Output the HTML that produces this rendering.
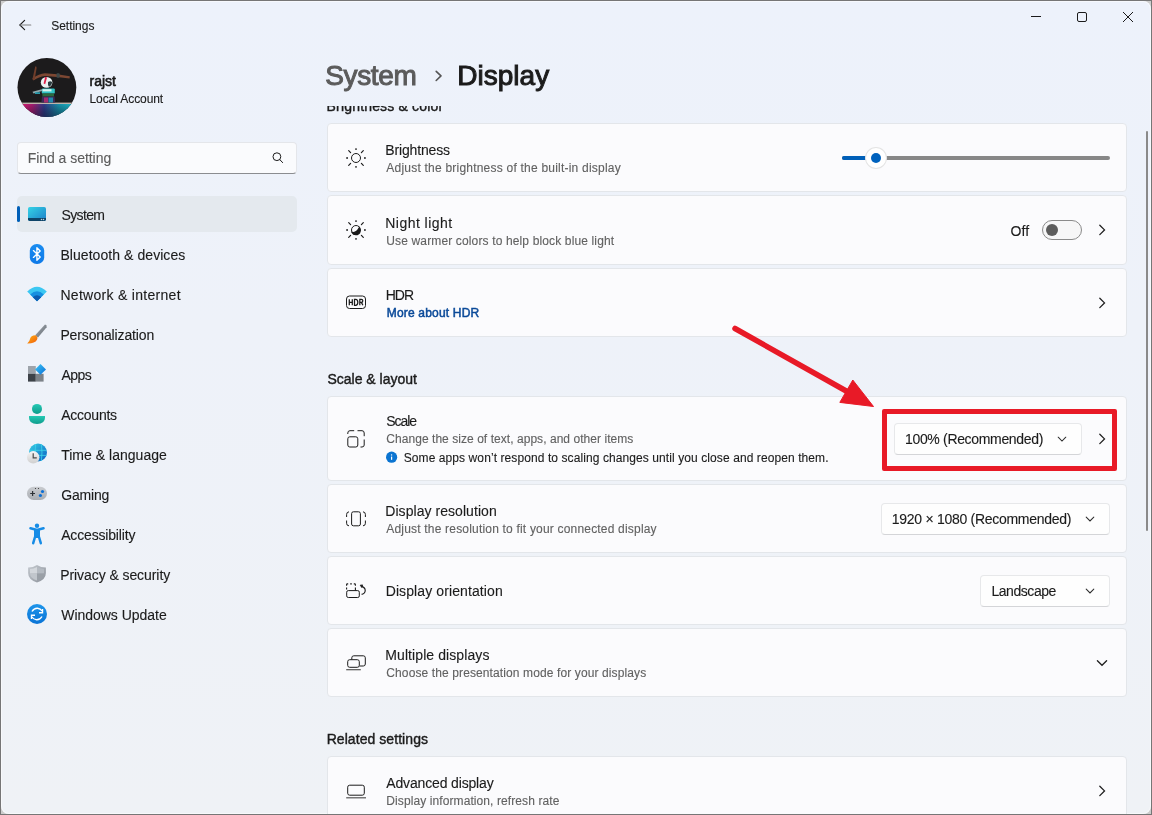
<!DOCTYPE html>
<html><head><meta charset="utf-8">
<style>
html,body{margin:0;padding:0;width:1152px;height:815px;overflow:hidden;background:#767676;}
*{box-sizing:border-box;}
#outer{position:absolute;left:1px;top:1px;width:1150px;height:813px;background:#cdcdcd;overflow:hidden;}
#win{position:absolute;left:0;top:0;width:1150px;height:813px;border-radius:8px;overflow:hidden;
 background:linear-gradient(180deg,#edf2fb 0%,#eef2f9 40%,#eff2f6 100%);
 box-shadow:inset 0 0 0 1px rgba(255,255,255,.55);}
.a{position:absolute;}
.t{position:absolute;white-space:nowrap;line-height:1;font-family:"Liberation Sans",sans-serif;-webkit-font-smoothing:antialiased;}
.card{position:absolute;left:327px;width:800px;background:#fbfbfd;border:1px solid #e3e6ea;border-radius:4px;}
.dd{position:absolute;background:#fefefe;border:1px solid #e7e8ea;border-bottom-color:#d4d5d8;border-radius:4px;}
svg{position:absolute;overflow:visible;}
</style></head><body>
<div id="outer"><div id="win">
</div></div>
<div class="a" style="left:0;top:0;width:1152px;height:815px;">

<!-- back arrow -->
<svg style="left:0;top:0" width="1152" height="815" viewBox="0 0 1152 815">
 <g fill="none" stroke="#1b1b1b" stroke-width="1" stroke-linecap="round">
  <path d="M24.6 20.3 L19.8 25 L24.6 29.7" stroke-width="1.15"/>
  <path d="M20.2 25 H30.8" stroke="#808080" stroke-width="1.1"/>
 </g>
 <!-- window controls -->
 <g fill="none" stroke="#1b1b1b" stroke-width="1">
  <path d="M1031 16.5 H1041"/>
  <rect x="1077.5" y="12.5" width="9" height="9" rx="1.5"/>
  <path d="M1123 12 L1133 22 M1133 12 L1123 22"/>
 </g>
 <!-- scrollbar -->
 <rect x="1146" y="131" width="2" height="400" rx="1" fill="#8a8a8a"/>
</svg>

<!-- avatar -->
<svg style="left:17px;top:58px" width="60" height="60" viewBox="0 0 60 60">
 <defs>
  <clipPath id="avc"><circle cx="29.9" cy="29.5" r="29.4"/></clipPath>
  <linearGradient id="avg" x1="0" y1="0" x2="1" y2="0">
   <stop offset="0" stop-color="#ea1870"/><stop offset="0.25" stop-color="#a41c6e"/><stop offset="0.45" stop-color="#2f3a86"/><stop offset="0.7" stop-color="#168fa8"/><stop offset="1" stop-color="#1fc0cc"/>
  </linearGradient>
  <filter id="avb" x="-20%" y="-20%" width="140%" height="140%"><feGaussianBlur stdDeviation="0.45"/></filter>
  <linearGradient id="avd" x1="0" y1="0" x2="0" y2="1">
   <stop offset="0" stop-color="#000" stop-opacity="0"/><stop offset="1" stop-color="#101830" stop-opacity="0.55"/>
  </linearGradient>
 </defs>
 <g clip-path="url(#avc)">
  <rect x="0" y="0" width="60" height="60" fill="#1c1b1c"/>
  <rect x="0" y="44.6" width="60" height="1.4" fill="#bdb3ab"/>
  <rect x="0" y="46" width="60" height="14" fill="url(#avg)"/>
  <rect x="0" y="46" width="60" height="14" fill="url(#avd)"/>
  <g filter="url(#avb)">
  <!-- stick -->
  <path d="M15.5 20.5 Q22 15.5 28 15.2 Q40 15.5 52.8 18.2 L52.6 20.4 Q40 18.6 28 18 Q22 18.5 16.5 22.5 Z" fill="#7b4733"/>
  <path d="M18.2 8.6 Q19.8 8.2 19.6 10 L17.6 22 L15.4 21.6 Z" fill="#6f3d2a"/>
  <rect x="39.5" y="15.2" width="3.2" height="4.6" rx="1" fill="#3f4a4a"/>
  <!-- head -->
  <ellipse cx="29.6" cy="24.4" rx="5.8" ry="5.4" fill="#e9f1f1"/>
  <path d="M31 24 Q33.5 22.5 35.2 24.2 Q34.8 27.8 32 29 Q30.5 27 31 24 Z" fill="#2c3d40"/>
  <path d="M28.2 18.8 L30 19.6 L28.2 26.2 L26.6 25.4 Z" fill="#e0234a"/>
  <!-- body -->
  <rect x="24.8" y="30.4" width="13" height="5.2" rx="1.2" fill="#31c4c6"/>
  <rect x="25.5" y="31.2" width="9" height="2.2" fill="#d8f2ee"/>
  <rect x="25.4" y="35.6" width="11.6" height="3" fill="#2c6a3c"/>
  <path d="M25 38.6 H37.5 L38.2 44.6 H24.4 Z" fill="#3a2a58"/>
  <rect x="27" y="39.5" width="4" height="5" fill="#d02a78" opacity="0.7"/>
  <rect x="31.5" y="39.5" width="4.5" height="5" fill="#1aa0c0" opacity="0.8"/>
  <path d="M15.5 33.8 L24.8 31.2 L25 33 L16.5 35.5 Z" fill="#8fa8ac"/>
  <rect x="18" y="34.3" width="5" height="1.6" fill="#2aa6b8"/>
  </g>
 </g>
</svg>

<!-- search box -->
<div class="a" style="left:17px;top:142px;width:280px;height:32px;background:#fafbfd;border:1px solid #e4e6ea;border-bottom:1px solid #8b8d90;border-radius:4px;"></div>
<svg style="left:0;top:0" width="1" height="1" viewBox="0 0 1 1">
 <g fill="none" stroke="#1b1b1b" stroke-width="1">
  <circle cx="276.9" cy="156.7" r="3.9"/>
  <path d="M279.8 159.6 L282.6 162.6" stroke-linecap="round"/>
 </g>
</svg>

<!-- nav selected -->
<div class="a" style="left:17px;top:196px;width:280px;height:36px;background:#e4e9ee;border-radius:5px;"></div>
<div class="a" style="left:17px;top:206px;width:3px;height:16px;background:#005fb8;border-radius:1.5px;"></div>

<!-- nav icons -->
<svg style="left:0;top:0" width="1" height="1" viewBox="0 0 1 1">
 <defs>
  <linearGradient id="g_sys" x1="0" y1="0" x2="1" y2="1"><stop offset="0" stop-color="#35d3e6"/><stop offset="1" stop-color="#1c7fc8"/></linearGradient>
  <linearGradient id="g_bt" x1="0" y1="0" x2="0" y2="1"><stop offset="0" stop-color="#1a8cf0"/><stop offset="1" stop-color="#0f7ae8"/></linearGradient>
  <linearGradient id="g_brush" x1="0" y1="0" x2="1" y2="1"><stop offset="0" stop-color="#ffb514"/><stop offset="1" stop-color="#f05a0a"/></linearGradient>
  <linearGradient id="g_handle" x1="0" y1="0" x2="1" y2="1"><stop offset="0" stop-color="#a9b0b7"/><stop offset="1" stop-color="#5f666d"/></linearGradient>
  <linearGradient id="g_dia" x1="0" y1="0" x2="1" y2="1"><stop offset="0" stop-color="#3cc6f4"/><stop offset="1" stop-color="#0a6fd8"/></linearGradient>
  <linearGradient id="g_acc" x1="0" y1="0" x2="0" y2="1"><stop offset="0" stop-color="#26c9b4"/><stop offset="1" stop-color="#0e9c8c"/></linearGradient>
  <linearGradient id="g_globe" x1="0" y1="0" x2="1" y2="1"><stop offset="0" stop-color="#36d0e4"/><stop offset="1" stop-color="#0b5fc4"/></linearGradient>
  <linearGradient id="g_clock" x1="0" y1="0" x2="0" y2="1"><stop offset="0" stop-color="#f5f5f5"/><stop offset="1" stop-color="#cfcfcf"/></linearGradient>
  <linearGradient id="g_pad" x1="0" y1="0" x2="0" y2="1"><stop offset="0" stop-color="#c9ccd0"/><stop offset="1" stop-color="#a9adb2"/></linearGradient>
  <linearGradient id="g_shield" x1="0" y1="0" x2="1" y2="1"><stop offset="0" stop-color="#c6cbd1"/><stop offset="1" stop-color="#8b9199"/></linearGradient>
  <linearGradient id="g_upd" x1="0" y1="0" x2="0" y2="1"><stop offset="0" stop-color="#1e95ea"/><stop offset="1" stop-color="#0a74d6"/></linearGradient>
 </defs>
 <!-- System -->
 <rect x="28" y="207" width="18" height="14" rx="1.8" fill="url(#g_sys)"/>
 <path d="M28 218 H46 V219.2 Q46 221 44.2 221 H29.8 Q28 221 28 219.2 Z" fill="#0e4468"/>
 <circle cx="41.5" cy="219.4" r="0.75" fill="#bcd2da"/><circle cx="43.5" cy="219.4" r="0.75" fill="#bcd2da"/>
 <!-- Bluetooth -->
 <rect x="29.8" y="244" width="14.4" height="20" rx="7" ry="6.5" fill="url(#g_bt)"/>
 <path d="M33.4 250.6 L40.2 257 L36.9 260.3 V247.7 L40.2 251 L33.4 257.4" fill="none" stroke="#fff" stroke-width="1.35" stroke-linejoin="round" stroke-linecap="round"/>
 <!-- Wifi -->
 <path d="M27.2 291.6 Q37 282 46.8 291.6 L37 301.3 Z" fill="#3bc7f2"/>
 <path d="M30.2 294.6 Q37 288 43.8 294.6 L37 301.3 Z" fill="#168fe0"/>
 <path d="M32.8 297.2 Q37 293.2 41.2 297.2 L37 301.3 Z" fill="#0b5bb0"/>
 <!-- Brush -->
 <path d="M45 324.6 Q47.2 325 46.6 327.2 L38 337.6 L35.2 335.2 Z" fill="url(#g_handle)"/>
 <path d="M35.6 335.2 Q38.3 336.8 37 339.8 Q34.8 343.8 27.2 343.6 Q29.6 341.6 30 339 Q30.6 335.2 35.6 335.2 Z" fill="url(#g_brush)"/>
 <!-- Apps -->
 <rect x="28" y="366" width="7.8" height="7.8" fill="#9da3aa"/>
 <rect x="28" y="373.8" width="7.8" height="7.8" fill="#3d4248"/>
 <rect x="35.8" y="373.8" width="7.8" height="7.8" fill="#7c8288"/>
 <path d="M40.5 364 L46 369.4 L40.5 374.8 L35.1 369.4 Z" fill="url(#g_dia)"/>
 <!-- Accounts -->
 <circle cx="37" cy="408.9" r="5" fill="url(#g_acc)"/>
 <path d="M29 416 H45 V417.5 Q45 424 37 424 Q29 424 29 417.5 Z" fill="url(#g_acc)"/>
 <!-- Time -->
 <circle cx="38" cy="452.5" r="9" fill="url(#g_globe)"/>
 <path d="M29.5 450.3 H46.5 M29.5 455.4 H46.5 M35.6 444 Q34.5 452.5 35.6 461 M41.4 444 Q42.5 452.5 41.4 461" stroke="#3fd6ea" stroke-width="0.8" fill="none"/>
 <circle cx="33.2" cy="457.3" r="6.2" fill="url(#g_clock)"/>
 <path d="M33.2 453.2 V457.8 H36.8" stroke="#4a4a4a" stroke-width="1.2" fill="none"/>
 <!-- Gaming -->
 <rect x="27" y="486.8" width="20" height="13.2" rx="6.6" fill="url(#g_pad)"/>
 <path d="M30.2 493.5 H35 M32.6 491 V496" stroke="#2e3236" stroke-width="1.2"/>
 <circle cx="42.5" cy="491.5" r="1.6" fill="#0b6fd6"/><circle cx="40.4" cy="495.5" r="1.6" fill="#0b6fd6"/>
 <circle cx="35.5" cy="488.5" r="0.6" fill="#333"/><circle cx="38.5" cy="488.5" r="0.6" fill="#333"/>
 <!-- Accessibility -->
 <circle cx="37" cy="525.8" r="2.2" fill="#168ce6"/>
 <path d="M30.5 528.3 L37 530 L43.5 528.3" stroke="#168ce6" stroke-width="2.6" stroke-linecap="round" fill="none"/>
 <rect x="34" y="529" width="6" height="9" fill="#168ce6"/>
 <path d="M35 537 L33.2 543.2 M39 537 L40.8 543.2" stroke="#168ce6" stroke-width="2.5" stroke-linecap="round"/>
 <!-- Privacy -->
 <path d="M37 565 Q41 567.5 45.9 567.5 V573 Q45.9 579.5 37 582.6 Q28.1 579.5 28.1 573 V567.5 Q33 567.5 37 565 Z" fill="url(#g_shield)"/>
 <path d="M37 567 Q40.5 569 44 569 V573.5 L37 573.5 Z" fill="#b4bac1"/>
 <path d="M37 567 Q33.5 569 30 569 V573.5 L37 573.5 Z" fill="#d3d7dc"/>
 <path d="M30 573.5 H37 V580.5 Q30 578 30 573.5 Z" fill="#c1c6cc"/>
 <path d="M44 573.5 H37 V580.5 Q44 578 44 573.5 Z" fill="#9aa0a7"/>
 <!-- Windows Update -->
 <circle cx="37" cy="614" r="10" fill="url(#g_upd)"/>
 <path d="M32 611.5 Q34 608 37.5 608.2 Q40.5 608.5 42 611" stroke="#fff" stroke-width="1.4" fill="none"/>
 <path d="M42.5 609 V612.8 H39" stroke="#fff" stroke-width="1.4" fill="none"/>
 <path d="M42 616.5 Q40 620 36.5 619.8 Q33.5 619.5 32 617" stroke="#fff" stroke-width="1.4" fill="none"/>
 <path d="M31.5 619 V615.2 H35" stroke="#fff" stroke-width="1.4" fill="none"/>
</svg>

<!-- clipped header -->
<div class="a" style="left:300px;top:106px;width:800px;height:20px;overflow:hidden;will-change:transform;">
 <div class="t" style="left:26.6px;top:-6.55px;font-size:14px;color:#1b1b1b;letter-spacing:0.17px;-webkit-text-stroke:0.4px #1b1b1b">Brightness &amp; color</div>
</div>

<!-- cards -->
<div class="card" style="top:123px;height:69px;"></div>
<div class="card" style="top:195px;height:70px;"></div>
<div class="card" style="top:268px;height:69px;"></div>
<div class="card" style="top:396px;height:85px;"></div>
<div class="card" style="top:484px;height:69px;"></div>
<div class="card" style="top:556px;height:69px;"></div>
<div class="card" style="top:628px;height:69px;"></div>
<div class="card" style="top:756px;height:69px;"></div>

<!-- dropdowns -->
<div class="dd" style="left:894px;top:423px;width:188px;height:32px;"></div>
<div class="dd" style="left:881px;top:503px;width:229px;height:32px;"></div>
<div class="dd" style="left:980px;top:575px;width:130px;height:32px;"></div>

<!-- toggle -->
<div class="a" style="left:1042px;top:220px;width:40px;height:20px;border:1px solid #8a8a8a;border-radius:10px;background:#f6f6f7;"></div>
<div class="a" style="left:1046px;top:224px;width:12px;height:12px;border-radius:6px;background:#5c5c5c;"></div>

<!-- slider -->
<div class="a" style="left:842px;top:156px;width:268px;height:4px;border-radius:2px;background:#878787;"></div>
<div class="a" style="left:842px;top:156px;width:34px;height:4px;border-radius:2px;background:#005fb8;"></div>
<div class="a" style="left:866px;top:148px;width:20px;height:20px;border-radius:10px;background:#fff;box-shadow:0 0 0 1px #e4e4e4;"></div>
<div class="a" style="left:871px;top:153px;width:10px;height:10px;border-radius:5px;background:#0062be;"></div>

<!-- card icons + chevrons -->
<svg style="left:0;top:0" width="1" height="1" viewBox="0 0 1 1">
 <g fill="none" stroke="#1b1b1b" stroke-width="1">
  <!-- sun -->
  <circle cx="356" cy="158" r="4.5"/>
  <g stroke-width="1.3" stroke-linecap="butt">
   <path d="M356 148.2 V150 M356 166 V167.8 M346.2 158 H348 M364 158 H365.8"/><path stroke-width="1.2" stroke-linecap="round" d="M348.7 150.7 L350.6 152.6 M361.4 163.4 L363.3 165.3 M348.7 165.3 L350.6 163.4 M361.4 152.6 L363.3 150.7"/>
  </g>
  <!-- night light -->
  <circle cx="356" cy="230" r="4.5"/>
  <path d="M352.2 232.5 Q356.5 233.5 359.2 228.2 Q360.8 233 357.5 234.4 Q353.5 235.2 352.2 232.5 Z" fill="#1b1b1b" stroke-width="1.5"/>
  <g stroke-width="1.3">
   <path d="M356 220.2 V222 M356 238 V239.8 M346.2 230 H348 M364 230 H365.8"/><path stroke-width="1.2" stroke-linecap="round" d="M348.7 222.7 L350.6 224.6 M361.4 235.4 L363.3 237.3 M348.7 237.3 L350.6 235.4 M361.4 224.6 L363.3 222.7"/>
  </g>
  <!-- HDR -->
  <rect x="346.5" y="296" width="19" height="12.5" rx="3"/>
  <!-- scale -->
  <path d="M347.8 434 V433 Q347.8 430.7 350 430.7 H354.2 M357.5 430.7 H362 Q364.2 430.7 364.2 433 V436.2 M364.2 439.5 V445 Q364.2 447 362 447 H360.5"/>
  <rect x="347.8" y="436.8" width="10" height="10.2" rx="2"/>
  <!-- resolution -->
  <path d="M349 511.8 Q346.6 512 346.6 514.5 V517 M346.6 520.5 V523.3 Q346.6 525.8 349 525.8 M363 511.8 Q365.4 512 365.4 514.5 V517 M365.4 520.5 V523.3 Q365.4 525.8 363 525.8"/>
  <rect x="351.6" y="511.8" width="8.8" height="14" rx="1.8"/>
  <!-- orientation -->
  <path stroke-width="1.1" d="M346.6 585.8 V584.6 Q346.6 583.9 347.4 583.9 H348.2 M350.2 583.9 H351.8 M353.8 583.9 H354.6 Q355.4 583.9 355.4 584.6 V585.8 M346.6 587.6 V589.4 M355.4 587.6 V590.4"/>
  <rect x="346.7" y="590.6" width="12.6" height="6.9" rx="1.6"/>
  <path stroke-width="1.15" d="M361.6 586.4 Q365.2 587.6 365.2 590.4 Q365.2 593.4 361.6 594.4"/>
  <path d="M360.2 585.2 L362.6 584.9 L361.9 587.6 Z" fill="#1b1b1b" stroke-width="0.8" stroke-linejoin="round"/>
  <!-- multiple displays -->
  <path d="M351.8 659.5 V657.8 Q351.8 655.8 353.8 655.8 H363.3 Q365.3 655.8 365.3 657.8 V664 Q365.3 666 363.3 666 H359.5"/>
  <rect x="347.7" y="659.7" width="11.6" height="7.6" rx="2"/>
  <path d="M346.2 669.7 H360.8" stroke="#555" stroke-width="1.2"/>
  <!-- advanced -->
  <rect x="347.7" y="785.2" width="16.6" height="10" rx="2"/>
  <path d="M346.2 797.8 H366" stroke="#555" stroke-width="1.2"/>
  <!-- chevrons right -->
  <g stroke="#1f1f1f" stroke-width="1.3" stroke-linecap="round" stroke-linejoin="miter">
  <path d="M1099.8 225.2 L1104.5 229.9 L1099.8 234.6"/>
  <path d="M1099.8 298.2 L1104.5 302.9 L1099.8 307.6"/>
  <path d="M1099.8 434.2 L1104.5 438.9 L1099.8 443.6"/>
  <path d="M1099.8 786.2 L1104.5 790.9 L1099.8 795.6"/>
  <path d="M1097.4 660.7 L1102 665.3 L1106.6 660.7"/>
  </g>
  <!-- dropdown chevrons -->
  <g stroke="#2e2e2e" stroke-width="1.05" stroke-linecap="round">
   <path d="M1058.2 437.2 L1062 441 L1065.8 437.2"/>
   <path d="M1086.2 517.1 L1090 520.9 L1093.8 517.1"/>
   <path d="M1086.2 589.1 L1090 592.9 L1093.8 589.1"/>
  </g>
 </g>
 <!-- HDR text -->
 <g fill="none" stroke="#1b1b1b" stroke-width="1.25">
  <path d="M349.3 299.3 V305.3 M352.3 299.3 V305.3 M349.3 302.3 H352.3"/>
  <path d="M354.5 299.3 V305.3 H355.7 Q357.8 305.3 357.8 302.3 Q357.8 299.3 355.7 299.3 Z"/>
  <path d="M359.8 305.3 V299.3 H361.3 Q362.8 299.3 362.8 300.85 Q362.8 302.4 361.3 302.4 H359.8 M361.4 302.4 L362.9 305.3"/>
 </g>
 <!-- info icon -->
 <circle cx="391.6" cy="457.2" r="5.6" fill="#0b74d1"/>
 <rect x="391" y="456.6" width="1.2" height="3.2" fill="#fff"/>
 <circle cx="391.6" cy="454.9" r="0.7" fill="#fff"/>
</svg>

<svg style="left:0;top:0" width="1" height="1" viewBox="0 0 1 1">
 <path d="M436.2 71.3 L441 75.9 L436.2 80.5" fill="none" stroke="#555" stroke-width="1.6" stroke-linecap="round" stroke-linejoin="round"/>
</svg>
<!-- red annotation -->
<div class="a" style="left:882px;top:409px;width:235px;height:62px;border:5px solid #e81a27;border-radius:2px;"></div>
<svg style="left:0;top:0" width="1" height="1" viewBox="0 0 1 1">
 <path d="M735 328.5 L848 392" stroke="#e81a27" stroke-width="5.5" stroke-linecap="round" fill="none"/>
 <path d="M873.5 406.5 L852.8 380 L839.8 402.4 Z" fill="#e81a27" stroke="#e81a27" stroke-width="1" stroke-linejoin="round"/>
</svg>

<div style="position:absolute;left:0;top:0;width:1152px;height:815px;will-change:transform">
<div class="t" style="left:51.20px;top:19.54px;font-size:12px;color:#1b1b1b;letter-spacing:-0.023px;-webkit-text-stroke:0.12px #1b1b1b">Settings</div>
<div class="t" style="left:89.50px;top:74.15px;font-size:14px;color:#1b1b1b;letter-spacing:-0.015px;-webkit-text-stroke:0.6px #1b1b1b">rajst</div>
<div class="t" style="left:89.50px;top:92.54px;font-size:12px;color:#1b1b1b;letter-spacing:-0.087px;-webkit-text-stroke:0.12px #1b1b1b">Local Account</div>
<div class="t" style="left:27.70px;top:151.15px;font-size:14px;color:#5c5c5c;letter-spacing:-0.043px;-webkit-text-stroke:0.12px #5c5c5c">Find a setting</div>
<div class="t" style="left:61.60px;top:208.15px;font-size:14px;color:#1b1b1b;letter-spacing:-0.663px;-webkit-text-stroke:0.12px #1b1b1b">System</div>
<div class="t" style="left:60.40px;top:248.15px;font-size:14px;color:#1b1b1b;letter-spacing:0.064px;-webkit-text-stroke:0.12px #1b1b1b">Bluetooth &amp; devices</div>
<div class="t" style="left:60.40px;top:288.15px;font-size:14px;color:#1b1b1b;letter-spacing:0.296px;-webkit-text-stroke:0.12px #1b1b1b">Network &amp; internet</div>
<div class="t" style="left:60.40px;top:328.15px;font-size:14px;color:#1b1b1b;letter-spacing:-0.131px;-webkit-text-stroke:0.12px #1b1b1b">Personalization</div>
<div class="t" style="left:61.40px;top:368.15px;font-size:14px;color:#1b1b1b;letter-spacing:-0.503px;-webkit-text-stroke:0.12px #1b1b1b">Apps</div>
<div class="t" style="left:61.20px;top:408.15px;font-size:14px;color:#1b1b1b;letter-spacing:-0.241px;-webkit-text-stroke:0.12px #1b1b1b">Accounts</div>
<div class="t" style="left:61.20px;top:448.15px;font-size:14px;color:#1b1b1b;letter-spacing:0.019px;-webkit-text-stroke:0.12px #1b1b1b">Time &amp; language</div>
<div class="t" style="left:61.20px;top:488.15px;font-size:14px;color:#1b1b1b;letter-spacing:-0.167px;-webkit-text-stroke:0.12px #1b1b1b">Gaming</div>
<div class="t" style="left:61.20px;top:528.15px;font-size:14px;color:#1b1b1b;letter-spacing:-0.170px;-webkit-text-stroke:0.12px #1b1b1b">Accessibility</div>
<div class="t" style="left:60.20px;top:568.15px;font-size:14px;color:#1b1b1b;letter-spacing:-0.073px;-webkit-text-stroke:0.12px #1b1b1b">Privacy &amp; security</div>
<div class="t" style="left:61.20px;top:608.15px;font-size:14px;color:#1b1b1b;letter-spacing:-0.019px;-webkit-text-stroke:0.12px #1b1b1b">Windows Update</div>
<div class="t" style="left:325.25px;top:62.09px;font-size:28px;color:#5b5b5b;letter-spacing:-0.365px;-webkit-text-stroke:1.0px #5b5b5b">System</div>
<div class="t" style="left:457.20px;top:62.09px;font-size:28px;color:#1b1b1b;letter-spacing:0.032px;-webkit-text-stroke:1.0px #1b1b1b">Display</div>
<div class="t" style="left:385.30px;top:143.45px;font-size:14px;color:#1b1b1b;letter-spacing:-0.161px;-webkit-text-stroke:0.12px #1b1b1b">Brightness</div>
<div class="t" style="left:386.30px;top:162.14px;font-size:12px;color:#616161;letter-spacing:0.218px;-webkit-text-stroke:0.12px #616161">Adjust the brightness of the built-in display</div>
<div class="t" style="left:385.30px;top:215.95px;font-size:14px;color:#1b1b1b;letter-spacing:0.453px;-webkit-text-stroke:0.12px #1b1b1b">Night light</div>
<div class="t" style="left:386.30px;top:234.54px;font-size:12px;color:#616161;letter-spacing:0.140px;-webkit-text-stroke:0.12px #616161">Use warmer colors to help block blue light</div>
<div class="t" style="left:385.80px;top:288.25px;font-size:14px;color:#1b1b1b;letter-spacing:-1.060px;-webkit-text-stroke:0.12px #1b1b1b">HDR</div>
<div class="t" style="left:386.80px;top:306.64px;font-size:12px;color:#0b4a99;letter-spacing:0.179px;-webkit-text-stroke:0.5px #0b4a99">More about HDR</div>
<div class="t" style="left:327.50px;top:371.75px;font-size:14px;color:#1b1b1b;letter-spacing:-0.008px;-webkit-text-stroke:0.4px #1b1b1b">Scale &amp; layout</div>
<div class="t" style="left:386.30px;top:414.45px;font-size:14px;color:#1b1b1b;letter-spacing:-1.084px;-webkit-text-stroke:0.12px #1b1b1b">Scale</div>
<div class="t" style="left:386.30px;top:433.24px;font-size:12px;color:#616161;letter-spacing:0.049px;-webkit-text-stroke:0.12px #616161">Change the size of text, apps, and other items</div>
<div class="t" style="left:403.70px;top:451.74px;font-size:12px;color:#1b1b1b;letter-spacing:0.089px;-webkit-text-stroke:0.12px #1b1b1b">Some apps won’t respond to scaling changes until you close and reopen them.</div>
<div class="t" style="left:905.00px;top:431.75px;font-size:14px;color:#1b1b1b;letter-spacing:-0.329px;-webkit-text-stroke:0.12px #1b1b1b">100% (Recommended)</div>
<div class="t" style="left:385.30px;top:504.25px;font-size:14px;color:#1b1b1b;letter-spacing:0.052px;-webkit-text-stroke:0.12px #1b1b1b">Display resolution</div>
<div class="t" style="left:386.30px;top:523.14px;font-size:12px;color:#616161;letter-spacing:0.190px;-webkit-text-stroke:0.12px #616161">Adjust the resolution to fit your connected display</div>
<div class="t" style="left:891.80px;top:512.45px;font-size:14px;color:#1b1b1b;letter-spacing:-0.285px;-webkit-text-stroke:0.12px #1b1b1b">1920 × 1080 (Recommended)</div>
<div class="t" style="left:385.70px;top:584.15px;font-size:14px;color:#1b1b1b;letter-spacing:0.101px;-webkit-text-stroke:0.12px #1b1b1b">Display orientation</div>
<div class="t" style="left:991.40px;top:584.15px;font-size:14px;color:#1b1b1b;letter-spacing:-0.440px;-webkit-text-stroke:0.12px #1b1b1b">Landscape</div>
<div class="t" style="left:385.30px;top:647.95px;font-size:14px;color:#1b1b1b;letter-spacing:0.087px;-webkit-text-stroke:0.12px #1b1b1b">Multiple displays</div>
<div class="t" style="left:386.30px;top:666.64px;font-size:12px;color:#616161;letter-spacing:0.113px;-webkit-text-stroke:0.12px #616161">Choose the presentation mode for your displays</div>
<div class="t" style="left:326.70px;top:731.85px;font-size:14px;color:#1b1b1b;letter-spacing:0.060px;-webkit-text-stroke:0.4px #1b1b1b">Related settings</div>
<div class="t" style="left:386.30px;top:775.75px;font-size:14px;color:#1b1b1b;letter-spacing:-0.156px;-webkit-text-stroke:0.12px #1b1b1b">Advanced display</div>
<div class="t" style="left:386.30px;top:795.14px;font-size:12px;color:#616161;letter-spacing:0.094px;-webkit-text-stroke:0.12px #616161">Display information, refresh rate</div>
<div class="t" style="left:1010.40px;top:224.05px;font-size:14px;color:#1b1b1b;letter-spacing:0.187px;-webkit-text-stroke:0.12px #1b1b1b">Off</div>
</div>
</div>
<div style="position:absolute;left:0;top:0;width:1152px;height:815px;border:1px solid #767676;"></div>
</body></html>
